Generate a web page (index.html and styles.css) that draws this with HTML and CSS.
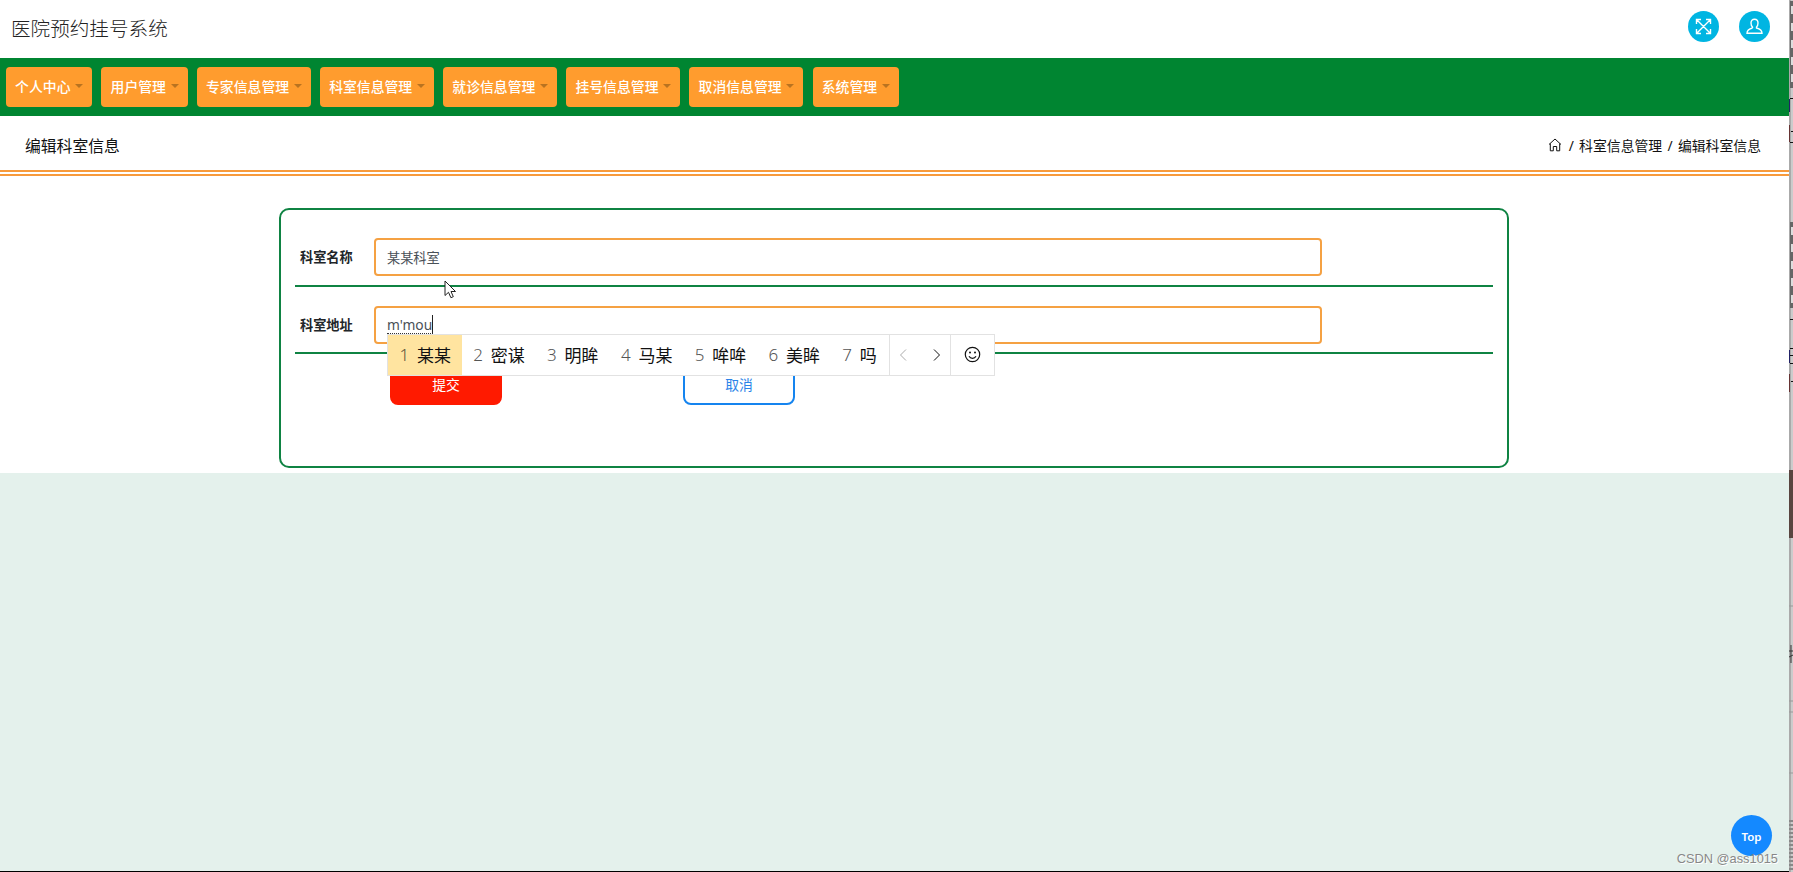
FILE: index.html
```
<!DOCTYPE html>
<html lang="zh-CN">
  <head>
    <meta charset="UTF-8" />
    <title>医院预约挂号系统</title>
    <link rel="stylesheet" href="styles.css">
  </head>
  <body>
    <div class="wrapper">
      <header class="top-navbar">
        <h1 class="brand">医院预约挂号系统</h1>
        <div class="top-icons">
          <a class="round-icon">
            <svg width="17" height="17" viewBox="0 0 17 17">
              <path d="M2 2L15 15M15 2L2 15M6 1.5H1.5V6M11 1.5H15.5V6M6 15.5H1.5V11M11 15.5H15.5V11" />
            </svg>
          </a>
          <a class="round-icon">
            <svg width="17" height="17" viewBox="0 0 17 17">
              <path d="M6.5 10V9C5.2 8 5 6.500 5 5C5 2.500 6.400 1.200 8.500 1.200S12 2.500 12 5C12 6.500 11.800 8 10.500 9V10C13 10.700 16 12 16 15.200H1C1 12 4 10.700 6.500 10" />
            </svg>
          </a>
        </div>
      </header>
      <nav class="menu">
        <a class="menu-item">个人中心<i class="caret"></i></a>
        <a class="menu-item">用户管理<i class="caret"></i></a>
        <a class="menu-item">专家信息管理<i class="caret"></i></a>
        <a class="menu-item">科室信息管理<i class="caret"></i></a>
        <a class="menu-item">就诊信息管理<i class="caret"></i></a>
        <a class="menu-item">挂号信息管理<i class="caret"></i></a>
        <a class="menu-item">取消信息管理<i class="caret"></i></a>
        <a class="menu-item">系统管理<i class="caret"></i></a>
      </nav>
      <div class="breadcrumb-bar">
        <h3 class="page-title">编辑科室信息</h3>
        <div class="breadcrumb">
          <svg class="home" width="14" height="14" viewBox="0 0 14 14">
            <path d="M1 6.500L7 1L13 6.500M2.300 5.500V12.800H5.300V8.500H8.700V12.800H11.700V5.500" />
          </svg>
          <span>/</span>
          <span>科室信息管理</span>
          <span>/</span>
          <span>编辑科室信息</span>
        </div>
      </div>
      <main class="content">
        <form class="widget">
          <div class="form-row">
            <label class="label">科室名称</label>
            <div class="input">某某科室</div>
          </div>
          <div class="form-row">
            <label class="label">科室地址</label>
            <div class="input">
              <span class="composing">m'mou</span>
              <!-- input method candidates -->
              <div class="ime">
                <div class="word active"><b>1</b>某某</div>
                <div class="word"><b>2</b>密谋</div>
                <div class="word"><b>3</b>明眸</div>
                <div class="word"><b>4</b>马某</div>
                <div class="word"><b>5</b>哞哞</div>
                <div class="word"><b>6</b>美眸</div>
                <div class="word last"><b>7</b>吗</div>
                <div class="pager">
                  <svg width="8" height="12" viewBox="0 0 8 12"><path class="off" d="M7 0.500L1.500 6L7 11.500" /></svg>
                  <svg width="8" height="12" viewBox="0 0 8 12"><path d="M1 0.500L6.500 6L1 11.500" /></svg>
                </div>
                <div class="emoji">
                  <svg width="17" height="17" viewBox="0 0 17 17">
                    <circle cx="8.500" cy="8.500" r="7.200" />
                    <path d="M5 10.300C6.500 13 10.500 13 12 10.300" />
                    <circle class="eye" cx="6" cy="6.500" r="1" />
                    <circle class="eye" cx="11" cy="6.500" r="1" />
                  </svg>
                </div>
              </div>
            </div>
          </div>
          <div class="buttons">
            <a class="btn submit">提交</a>
            <a class="btn cancel">取消</a>
          </div>
          <svg class="cursor" width="13" height="19" viewBox="0 0 13 19">
            <path d="M1 1V15.500L4.500 12.300L6.900 17.700L9.300 16.700L7 11.500H11.500Z" />
          </svg>
        </form>
      </main>
      <a class="back-top">Top</a>
      <span class="watermark">CSDN @ass1015</span>
    </div>
    <svg class="edge" width="4" height="872" viewBox="0 0 4 872">
      <path class="dots" d="M3 1V88M3 222V308" />
      <path class="dashes" d="M3 6V88M3 227V308" />
      <path class="lines" d="M1 98.500H4M2 131.500H4M1 142.500H4M1 319.500H4M1 348.500H4M1 355.500H4M1 363.500H4M2 381.500H4" />
      <path class="blue" d="M0.500 99V112M0.500 350V363" />
      <path class="red" d="M0.500 125V142M0.500 374V392" />
      <rect class="photo" y="470" width="4" height="68" />
      <path class="glyph" d="M0 651H4M2 645V663M0 657L4 655" />
      <path class="rule" d="M0 606H4M0 701H4M0 712H4M0 773H4" />
      <path class="noise" d="M2 820V872" />
    </svg>
  </body>
</html>
```
FILE: styles.css
```
* {
  margin: 0;
  padding: 0;
  box-sizing: border-box;
}

body {
  display: flex;
  height: 872px;
  overflow: hidden;
  font-family: "Noto Sans", "Noto Sans CJK SC", sans-serif;
  font-size: 14px;
  color: #212529;
}

svg {
  fill: none;
  stroke: currentColor;
}

.wrapper {
  position: relative;
  width: 1789px;
  height: 872px;
  background-color: #e4f1ec;
  border-bottom: 1px solid #000;
}

.top-navbar {
  display: flex;
  justify-content: space-between;
  height: 58px;
  padding: 11px 19px 0 11px;
  background-color: #fff;
}

.brand {
  font-family: "Noto Sans CJK SC", sans-serif;
  font-size: 19.6px;
  font-weight: 300;
  line-height: 33px;
  color: #222;
}

.top-icons {
  display: flex;
  gap: 20px;
}

.round-icon {
  display: flex;
  justify-content: center;
  align-items: center;
  width: 31px;
  height: 31px;
  border-radius: 50%;
  background-color: #00b5e2;
  color: #fff;
}

.round-icon svg {
  stroke-width: 1.4;
}

.menu {
  display: flex;
  gap: 9.2px;
  height: 57.5px;
  padding: 9px 6px;
  background-color: #008531;
}

.menu-item {
  display: flex;
  align-items: center;
  height: 39.5px;
  padding: 0 9.1px 2px;
  border-radius: 4px;
  background-color: #ff9c2e;
  color: #fff;
  font-size: 13.85px;
  font-weight: 500;
}

.caret {
  margin-left: 4.700px;
  border-top: 4px solid #b97320;
  border-left: 4px solid transparent;
  border-right: 4px solid transparent;
}

.breadcrumb-bar {
  display: flex;
  justify-content: space-between;
  align-items: center;
  height: 60.5px;
  padding: 5px 28px 0 25px;
  background-color: #fff;
  border-bottom: 6px double #f79a3c;
  color: #111;
}

.page-title {
  font-size: 15.8px;
  font-weight: 400;
}

.breadcrumb {
  display: flex;
  align-items: center;
  gap: 5.300px;
  font-size: 13.85px;
}

.home {
  margin-right: 1px;
}

.content {
  height: 297px;
  padding: 32px 0 0 279px;
  background-color: #fff;
}

.widget {
  position: relative;
  width: 1230px;
  height: 260px;
  padding: 13px 14px;
  border: 2px solid #0f8343;
  border-radius: 10px;
}

.form-row {
  display: flex;
  height: 67.2px;
  padding: 15px 0 0 5px;
  border-bottom: 2px solid #0f8343;
}

.form-row:first-child {
  height: 64px;
}

.form-row:nth-child(2) {
  padding-top: 18.5px;
}

.label {
  width: 74px;
  font-size: 13.2px;
  font-weight: 600;
  line-height: 38px;
}

.input {
  position: relative;
  display: flex;
  align-items: center;
  width: 947.5px;
  height: 38px;
  padding-left: 11px;
  border: 2px solid #f5a143;
  border-radius: 4px;
  font-size: 13.2px;
  color: #495057;
}

.composing {
  height: 19px;
  border-right: 1px solid #222;
  border-bottom: 1px dotted #333;
  font-size: 13.8px;
  line-height: 19px;
}

.ime {
  position: absolute;
  z-index: 2;
  top: 26px;
  left: 11px;
  display: flex;
  width: 608px;
  height: 42px;
  border: 1px solid #e2e2e2;
  background-color: #fff;
  color: #111;
  font-size: 17px;
}

.word {
  display: flex;
  align-items: center;
  width: 73.8px;
  padding: 0 0 1px 11.500px;
}

.word b {
  width: 17.5px;
  color: #555;
  font-weight: 300;
}

.active {
  background-color: #ffe4a0;
}

.active b {
  color: #60563c;
}

.last {
  width: 58px;
}

.pager {
  display: flex;
  justify-content: space-between;
  align-items: center;
  width: 61px;
  padding: 0 9px;
  border-left: 1px solid #e2e2e2;
}

.off {
  stroke: #aaa;
}

.emoji {
  display: flex;
  flex: 1;
  justify-content: center;
  align-items: center;
  border-left: 1px solid #e2e2e2;
}

.emoji svg {
  stroke-width: 1.200;
}

.eye {
  fill: #111;
  stroke: none;
}

.buttons {
  display: flex;
  gap: 181px;
  padding: 11.500px 0 0 95px;
}

.btn {
  width: 112px;
  height: 39.5px;
  border: 2px solid #ff1a00;
  border-radius: 8px;
  font-size: 13.85px;
  line-height: 33px;
  text-align: center;
}

.submit {
  background-color: #ff1a00;
  color: #fff;
}

.cancel {
  border-color: #1584ef;
  color: #2b83e8;
}

.cursor {
  position: absolute;
  top: 70px;
  left: 163px;
}

.cursor path {
  fill: #fff;
  stroke: #222;
}

.back-top {
  position: absolute;
  right: 17px;
  bottom: 15.5px;
  width: 41px;
  height: 41px;
  border-radius: 50%;
  background-color: #1489ff;
  color: #fff;
  font-size: 11.5px;
  font-weight: 600;
  line-height: 43px;
  text-align: center;
}

.watermark {
  position: absolute;
  right: 11px;
  bottom: 4px;
  font-family: "Liberation Sans", sans-serif;
  font-size: 12.8px;
  line-height: 16px;
  color: #888;
  text-shadow: 1px 1px 0 #fff;
}

/* sliver of the window behind */
.edge {
  background: linear-gradient(90deg, #aaa 50%, #cbcbcb 50%);
}

.dots {
  stroke: #666;
  stroke-width: 4;
}

.dashes {
  stroke: #ddd;
  stroke-width: 2;
  stroke-dasharray: 8 9;
}

.lines {
  stroke: #111;
}

.blue {
  stroke: #226;
}

.red {
  stroke: #633;
}

.photo {
  fill: #594540;
  stroke: none;
}

.glyph {
  stroke: #333;
}

.rule {
  stroke: #999;
}

.noise {
  stroke: #888;
  stroke-width: 4;
  stroke-dasharray: 2 2;
}
```
